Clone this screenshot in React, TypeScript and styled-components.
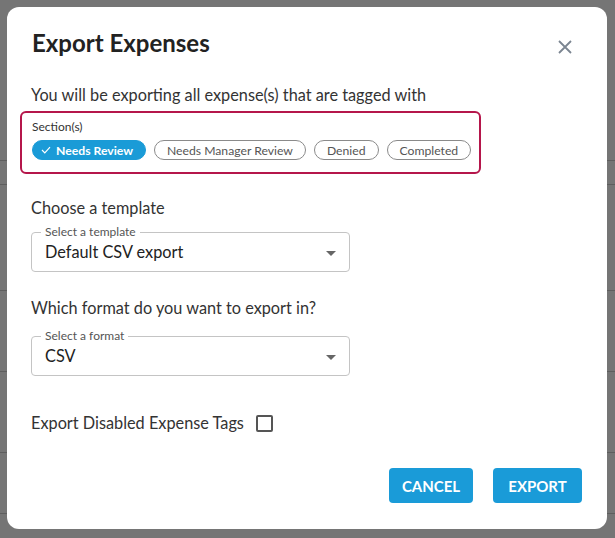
import React from "react";
import styled, { createGlobalStyle } from "styled-components";

const Global = createGlobalStyle`
  html, body { margin: 0; padding: 0; }
  body { font-family: Lato, "Open Sans", sans-serif; width: 615px; height: 538px; overflow: hidden; }
`;

const Page = styled.div`
  position: relative;
  width: 615px;
  height: 538px;
  background: #fff;
  overflow: hidden;
  color: #222;
`;

const BgHeader = styled.div`
  height: 85px;
  display: flex;
  align-items: center;
  margin-left: -160px;
  font-size: 34px;
  font-weight: 700;
`;

const BgRow = styled.div<{ $h: number }>`
  height: ${(p) => p.$h}px;
  border-bottom: 1px solid #ccc;
  display: flex;
  align-items: center;
  gap: 40px;
  font-size: 14px;
  color: #333;
`;

const BgCircle = styled.div`
  width: 28px;
  height: 28px;
  border-radius: 50%;
  background: #888;
  margin-left: 42px;
`;

const BgCell = styled.span<{ $ml: number }>`
  margin-left: ${(p) => p.$ml}px;
`;

const Overlay = styled.div`
  position: absolute;
  inset: 0;
  background: rgba(0, 0, 0, 0.54);
`;

const Modal = styled.div`
  position: absolute;
  left: 7px;
  top: 7px;
  width: 600px;
  height: 522px;
  background: #fff;
  border-radius: 12px;
  box-sizing: border-box;
  padding: 0 24px;
  display: flex;
  flex-direction: column;
`;

const Header = styled.div`
  display: flex;
  align-items: center;
  justify-content: space-between;
  padding-top: 13px;
  height: 44px;
`;

const Title = styled.h2`
  margin: 0;
  font-size: 24px;
  font-weight: 700;
  color: #222;
  padding-left: 1px;
`;

const CloseButton = styled.button`
  border: none;
  background: none;
  padding: 0;
  margin-right: 10px;
  margin-top: 10px;
  width: 16px;
  height: 16px;
  display: flex;
  cursor: pointer;
`;

const Intro = styled.p`
  margin: 21px 0 0 0;
  font-size: 16.3px;
  color: #333;
  line-height: 20px;
`;

const SectionBox = styled.div`
  margin: 6px 0 0 -11px;
  width: 461px;
  height: 63px;
  box-sizing: border-box;
  border: 2px solid #b5164b;
  border-radius: 6px;
  padding: 7px 10px 0 10px;
`;

const SectionLabel = styled.div`
  font-size: 12px;
  color: #333;
  line-height: 14px;
`;

const Chips = styled.div`
  display: flex;
  gap: 8px;
  margin-top: 6px;
`;

const Chip = styled.span<{ $on?: boolean }>`
  flex-shrink: 0;
  white-space: nowrap;
  display: inline-flex;
  align-items: center;
  gap: 5px;
  height: 20px;
  box-sizing: border-box;
  padding: 0 12px 0 ${(p) => (p.$on ? 8 : 12)}px;
  border-radius: 10px;
  font-size: 12.2px;
  font-weight: ${(p) => (p.$on ? 700 : 400)};
  color: ${(p) => (p.$on ? "#fff" : "#555")};
  background: ${(p) => (p.$on ? "#1a9bd7" : "#fff")};
  border: 1px solid ${(p) => (p.$on ? "#1a9bd7" : "#8a8a8a")};
`;

const FieldLabel = styled.div<{ $mt: number }>`
  margin-top: ${(p) => p.$mt}px;
  font-size: 16.3px;
  color: #333;
  line-height: 20px;
`;

const SelectBox = styled.div<{ $mt: number }>`
  position: relative;
  margin-top: ${(p) => p.$mt}px;
  width: 319px;
  height: 40px;
  box-sizing: border-box;
  border: 1px solid #c4c4c4;
  border-radius: 4px;
  display: flex;
  align-items: center;
  justify-content: space-between;
  padding: 0 13px 2px 13px;
`;

const Legend = styled.span`
  position: absolute;
  top: -8px;
  left: 9px;
  padding: 0 4px;
  background: #fff;
  font-size: 12px;
  color: #555;
  line-height: 14px;
`;

const SelectValue = styled.span`
  font-size: 16.3px;
  color: #222;
`;

const Caret = styled.span`
  width: 0;
  height: 0;
  border-left: 5px solid transparent;
  border-right: 5px solid transparent;
  border-top: 5px solid #666;
  margin-top: 4px;
`;

const CheckRow = styled.label`
  margin-top: 37px;
  display: flex;
  align-items: center;
  gap: 12px;
  font-size: 16.3px;
  color: #333;
`;

const CheckBox = styled.span`
  width: 17px;
  height: 17px;
  box-sizing: border-box;
  border: 2px solid #555;
  border-radius: 2px;
  margin-top: 2px;
`;

const Footer = styled.div`
  margin-top: 36px;
  display: flex;
  justify-content: flex-end;
  gap: 20px;
  padding-right: 1px;
`;

const Button = styled.button<{ $w: number }>`
  width: ${(p) => p.$w}px;
  height: 35px;
  border: none;
  border-radius: 4px;
  background: #1a9bd8;
  color: #fff;
  font-family: Lato, sans-serif;
  font-size: 15px;
  font-weight: 700;
  cursor: pointer;
`;

export default function App() {
  return (
    <>
      <Global />
      <Page>
        <BgHeader>Expenses</BgHeader>
        <BgRow $h={75} />
        <BgRow $h={23} />
        <BgRow $h={105} />
        <BgRow $h={80} />
        <BgRow $h={80} />
        <BgRow $h={60}>
          <BgCircle />
          <BgCell $ml={110}>Mileage</BgCell>
          <BgCell $ml={40}>TBS Test</BgCell>
        </BgRow>
        <Overlay />
        <Modal role="dialog" aria-label="Export Expenses">
          <Header>
            <Title>Export Expenses</Title>
            <CloseButton aria-label="close">
              <svg width="16" height="16" viewBox="0 0 16 16">
                <path d="M2 2 L14 14 M14 2 L2 14" stroke="#7b8591" strokeWidth="1.8" fill="none" />
              </svg>
            </CloseButton>
          </Header>
          <Intro>You will be exporting all expense(s) that are tagged with</Intro>
          <SectionBox>
            <SectionLabel>Section(s)</SectionLabel>
            <Chips>
              <Chip $on>
                <svg width="10" height="8" viewBox="0 0 10 8">
                  <path d="M1 4 L3.8 6.8 L9 1.2" stroke="#fff" strokeWidth="1.2" fill="none" />
                </svg>
                Needs Review
              </Chip>
              <Chip>Needs Manager Review</Chip>
              <Chip>Denied</Chip>
              <Chip>Completed</Chip>
            </Chips>
          </SectionBox>
          <FieldLabel $mt={24}>Choose a template</FieldLabel>
          <SelectBox $mt={14}>
            <Legend>Select a template</Legend>
            <SelectValue>Default CSV export</SelectValue>
            <Caret />
          </SelectBox>
          <FieldLabel $mt={26}>Which format do you want to export in?</FieldLabel>
          <SelectBox $mt={18}>
            <Legend>Select a format</Legend>
            <SelectValue>CSV</SelectValue>
            <Caret />
          </SelectBox>
          <CheckRow>
            Export Disabled Expense Tags
            <CheckBox />
          </CheckRow>
          <Footer>
            <Button $w={84}>CANCEL</Button>
            <Button $w={89}>EXPORT</Button>
          </Footer>
        </Modal>
      </Page>
    </>
  );
}
